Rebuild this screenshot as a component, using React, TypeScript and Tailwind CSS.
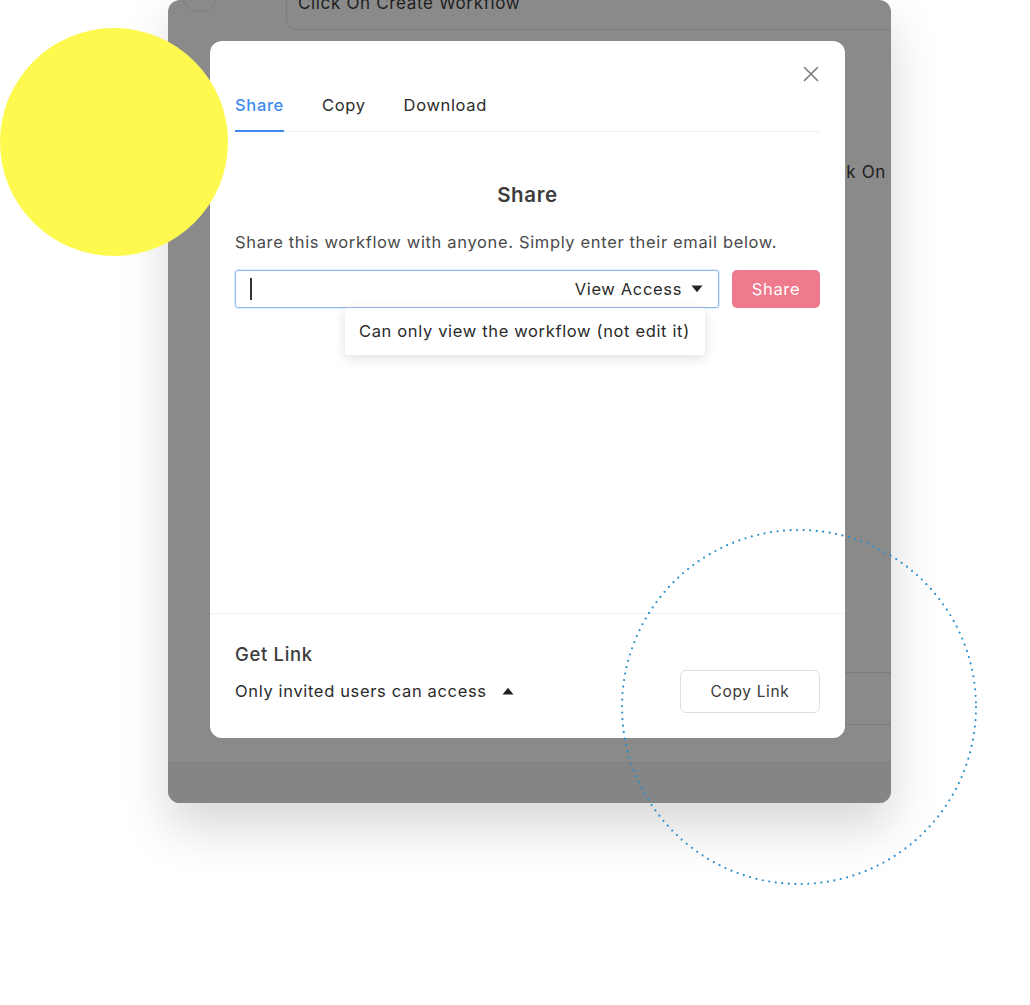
import React from "react";

function CloseIcon() {
  return (
    <svg width="16" height="16" viewBox="0 0 16 16" fill="none">
      <path d="M1.5 1.5L14.5 14.5M14.5 1.5L1.5 14.5" stroke="#7a7a7a" strokeWidth="1.6" strokeLinecap="round" />
    </svg>
  );
}

function CaretDown() {
  return (
    <svg width="12" height="8" viewBox="0 0 12 8">
      <path d="M0.5 0.5H11.5L6 7.2Z" fill="#222" />
    </svg>
  );
}

function CaretUp() {
  return (
    <svg width="12" height="8" viewBox="0 0 12 8">
      <path d="M0.5 7.5H11.5L6 0.8Z" fill="#222" />
    </svg>
  );
}

export default function App() {
  return (
    <div
      className="relative w-[1030px] h-[1005px] bg-white overflow-hidden tracking-[0.65px]"
      style={{ fontFamily: "Inter, 'Noto Sans', sans-serif" }}
    >
      {/* Background app window dimmed */}
      <div className="relative ml-[168px] w-[723px] h-[803px] rounded-[12px] bg-[#8a8a8a] overflow-hidden shadow-[0_24px_50px_rgba(0,0,0,0.16)] flex flex-col">
        <div className="flex items-start -mt-[22px] pl-[13px] gap-[67px]">
          <div className="w-[38px] h-[38px] rounded-full border border-[#7f7f7f] mt-[-4px] flex items-end justify-center pb-[20px] text-[14px] font-bold text-[#2a2a2a]">
            30
          </div>
          <div className="flex-1 h-[52px] rounded-[10px] border border-[#7c7c7c] -mr-[20px] pl-[11px] pt-[12px] text-[17px] text-[#1e1e1e] leading-[24px]">
            Click On Create Workflow
          </div>
        </div>
        <div className="flex justify-end pr-[5px] mt-[130px] text-[17px] text-[#1e1e1e] leading-[24px]">
          Click On
        </div>
        <div className="ml-[117px] mt-[488px] h-[53px] border-y border-[#7b7b7b]"></div>
        <div className="flex-1 mt-[37px] border-t border-[#7f7f80] bg-[#848586]"></div>

        {/* Modal */}
        <div className="absolute left-[42px] top-[41px] w-[635px] h-[697px] bg-white rounded-[12px] flex flex-col">
          <button className="absolute right-[26px] top-[25px]">
            <CloseIcon />
          </button>
          <div className="px-[25px] pt-[52px]">
            <div className="flex gap-[38px] border-b border-[#eeeeee] text-[16.5px] leading-[24px]">
              <div className="relative pb-[14px] text-[#3d8bef] font-medium">
                Share
                <div className="absolute left-0 right-0 -bottom-[1px] h-[2px] bg-[#3d8bef]"></div>
              </div>
              <div className="pb-[14px] text-[#2b2b2b]">Copy</div>
              <div className="pb-[14px] text-[#2b2b2b]">Download</div>
            </div>
            <div className="mt-[49px] text-center text-[20.5px] font-semibold text-[#3c3c3c] leading-[28px]">Share</div>
            <div className="mt-[21px] text-[16.5px] text-[#4a4a4a] leading-[24px]">
              Share this workflow with anyone. Simply enter their email below.
            </div>
            <div className="mt-[16px] flex gap-[13px]">
              <div className="relative flex-1 h-[38px] rounded-[3px] border border-[#8fb8f3] shadow-[0_0_0_1px_rgba(143,184,243,0.25)] flex items-center pl-[14px] pr-[15px]">
                <div className="w-[1.5px] h-[22px] bg-[#333]"></div>
                <div className="ml-auto flex items-center gap-[9px] text-[16.5px] text-[#2b2b2b]">
                  View Access <CaretDown />
                </div>
                <div className="absolute left-[109px] top-[37px] w-[360px] h-[47px] bg-white rounded-[3px] shadow-[0_3px_12px_rgba(0,0,0,0.13)] flex items-center pl-[14px] text-[16.5px] text-[#2b2b2b] z-10">
                  Can only view the workflow (not edit it)
                </div>
              </div>
              <button className="w-[88px] h-[38px] rounded-[5px] bg-[#ef7a8c] text-white text-[16.5px]">Share</button>
            </div>
          </div>
          <div className="flex-1"></div>
          <div className="h-[125px] border-t border-[#f1f1f1] px-[25px] pt-[27px] flex items-start justify-between">
            <div className="flex flex-col">
              <div className="text-[18.5px] font-medium text-[#3c3c3c] leading-[26px]">Get Link</div>
              <div className="mt-[12px] flex items-center gap-[15px] text-[16.5px] text-[#2b2b2b] leading-[24px]">
                Only invited users can access <CaretUp />
              </div>
            </div>
            <button className="mt-[29px] w-[140px] h-[43px] rounded-[6px] border border-[#dedede] text-[15.5px] text-[#3a3a3a]">
              Copy Link
            </button>
          </div>
        </div>
      </div>

      {/* Decorative yellow circle */}
      <div className="absolute left-0 top-[28px] w-[228px] h-[228px] rounded-full bg-[#fef94f]"></div>

      {/* Decorative dotted circle */}
      <svg className="absolute left-[620px] top-[528px]" width="358" height="358" viewBox="0 0 358 358">
        <circle cx="179" cy="179" r="177" fill="none" stroke="#2b8fcf" strokeWidth="2.2" strokeDasharray="0 6.55" strokeLinecap="round" />
      </svg>
    </div>
  );
}
